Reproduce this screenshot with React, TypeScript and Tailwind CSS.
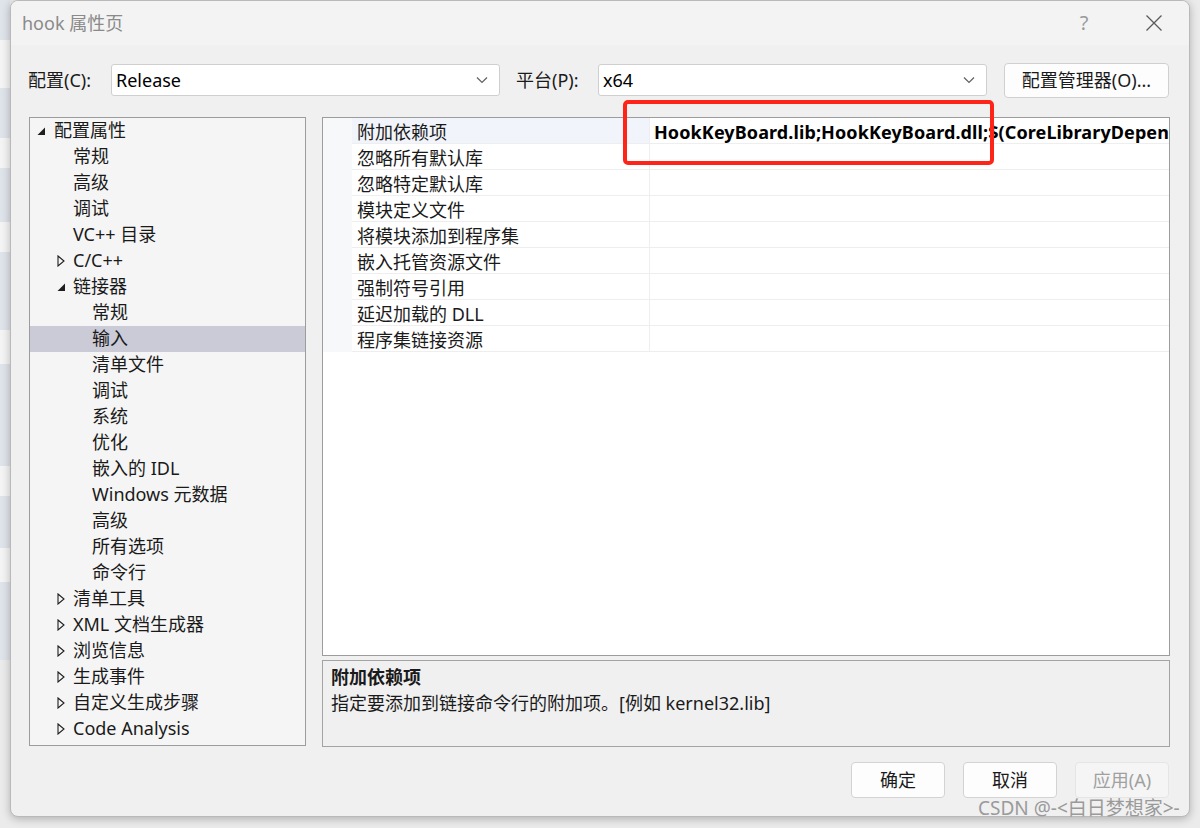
import React from 'react';

type TreeItem = {
  label: string;
  level: 0 | 1 | 2;
  expander?: 'open' | 'closed';
  selected?: boolean;
};

const tree: TreeItem[] = [
  { label: '配置属性', level: 0, expander: 'open' },
  { label: '常规', level: 1 },
  { label: '高级', level: 1 },
  { label: '调试', level: 1 },
  { label: 'VC++ 目录', level: 1 },
  { label: 'C/C++', level: 1, expander: 'closed' },
  { label: '链接器', level: 1, expander: 'open' },
  { label: '常规', level: 2 },
  { label: '输入', level: 2, selected: true },
  { label: '清单文件', level: 2 },
  { label: '调试', level: 2 },
  { label: '系统', level: 2 },
  { label: '优化', level: 2 },
  { label: '嵌入的 IDL', level: 2 },
  { label: 'Windows 元数据', level: 2 },
  { label: '高级', level: 2 },
  { label: '所有选项', level: 2 },
  { label: '命令行', level: 2 },
  { label: '清单工具', level: 1, expander: 'closed' },
  { label: 'XML 文档生成器', level: 1, expander: 'closed' },
  { label: '浏览信息', level: 1, expander: 'closed' },
  { label: '生成事件', level: 1, expander: 'closed' },
  { label: '自定义生成步骤', level: 1, expander: 'closed' },
  { label: 'Code Analysis', level: 1, expander: 'closed' },
];

const props = [
  '附加依赖项',
  '忽略所有默认库',
  '忽略特定默认库',
  '模块定义文件',
  '将模块添加到程序集',
  '嵌入托管资源文件',
  '强制符号引用',
  '延迟加载的 DLL',
  '程序集链接资源',
];

function Expander({ kind }: { kind: 'open' | 'closed' }) {
  if (kind === 'open') {
    return (
      <svg width="10" height="10" viewBox="0 0 10 10">
        <polygon points="9,1.5 9,9 1.5,9" fill="#1e1e1e" />
      </svg>
    );
  }
  return (
    <svg width="10" height="12" viewBox="0 0 10 12">
      <polygon points="2,1 8,6 2,11" fill="none" stroke="#1e1e1e" strokeWidth="1.1" />
    </svg>
  );
}

function Chevron() {
  return (
    <svg width="12" height="8" viewBox="0 0 12 8">
      <polyline points="1,1.5 6,6.5 11,1.5" fill="none" stroke="#606060" strokeWidth="1.2" />
    </svg>
  );
}

function Select({ value }: { value: string }) {
  return (
    <div className="w-[389px] h-[32px] shrink-0 bg-white border border-[#cfcfcf] rounded-[3px] flex items-center pl-[4px] pr-[11px]">
      <span className="flex-1 text-[18px] text-black leading-none">{value}</span>
      <Chevron />
    </div>
  );
}

// sliver of the code editor that peeks out behind the dialog
const bands = [
  { h: 40, bg: 'bg-[#dfe3ea]' },
  { h: 48, bg: 'bg-[#f4f4f4]' },
  { h: 50, bg: 'bg-[#dfe3ea]' },
  { h: 30, bg: 'bg-[#f4f4f4]' },
  { h: 54, bg: 'bg-[#dfe3ea]' },
  { h: 30, bg: 'bg-[#f4f4f4]' },
  { h: 78, bg: 'bg-[#dfe3ea]' },
  { h: 34, bg: 'bg-[#f4f4f4]' },
  { h: 102, bg: 'bg-[#dfe3ea]' },
  { h: 30, bg: 'bg-[#f4f4f4]' },
  { h: 52, bg: 'bg-[#dfe3ea]' },
  { h: 34, bg: 'bg-[#f4f4f4]' },
  { h: 78, bg: 'bg-[#dfe3ea]' },
  { h: 168, bg: 'bg-[#ebebeb]' },
];

function CodeSliver() {
  return (
    <div className="w-[10px] h-[828px] flex flex-col overflow-hidden shrink-0">
      {bands.map((b, i) => (
        <div key={i} className={`${b.bg} shrink-0`} style={{ height: b.h }} />
      ))}
    </div>
  );
}

export default function App() {
  return (
    <div className="relative w-[1200px] h-[828px] bg-[#ebebeb] flex overflow-hidden [font-family:'Noto_Sans','Noto_Sans_CJK_SC',sans-serif] text-[#1a1a1a]">
      <CodeSliver />
      <div className="relative w-[1180px] h-[817px] shrink-0 rounded-[8px] border border-[#b9b9b9] bg-[#f0f0f0] shadow-[0_2px_8px_rgba(0,0,0,0.25)] flex flex-col overflow-hidden">
        {/* title bar */}
        <div className="h-[44px] shrink-0 bg-[#f3f3f3] flex items-center pl-[11px]">
          <span className="flex-1 text-[18px] text-[#8a8a8a] leading-none">hook 属性页</span>
          <span className="w-[40px] text-center text-[20px] text-[#9a9a9a] leading-none mr-[41px]">?</span>
          <svg width="18" height="18" viewBox="0 0 18 18" className="mr-[26px]">
            <path d="M1.5 1.5 L16.5 16.5 M16.5 1.5 L1.5 16.5" stroke="#5a5a5a" strokeWidth="1.3" />
          </svg>
        </div>

        {/* config row */}
        <div className="flex items-center h-[36px] mt-[17px] pl-[17px] pr-[20px]">
          <span className="w-[83px] shrink-0 text-[18px] leading-none">配置(C):</span>
          <Select value="Release" />
          <span className="ml-[16px] w-[82px] shrink-0 text-[18px] leading-none">平台(P):</span>
          <Select value="x64" />
          <div className="ml-[17px] w-[165px] h-[35px] shrink-0 bg-[#fdfdfd] border border-[#d0d0d0] rounded-[4px] flex items-center justify-center text-[18px] leading-none">
            配置管理器(O)...
          </div>
        </div>

        {/* main area */}
        <div className="flex mt-[19px] pl-[18px] pr-[19px] gap-[16px] h-[630px]">
          {/* tree */}
          <div className="w-[277px] h-[629px] shrink-0 overflow-hidden border border-[#9c9c9c] bg-[#f5f5f5] flex flex-col">
            {tree.map((t, i) => (
              <div
                key={i}
                className={`h-[26px] shrink-0 flex items-center ${t.selected ? 'bg-[#cbcbd8]' : ''}`}
              >
                <div
                  className={`flex items-center justify-center w-[12px] shrink-0 ${
                    t.level === 0 ? 'ml-[5px]' : 'ml-[25px]'
                  }`}
                >
                  {t.expander ? <Expander kind={t.expander} /> : null}
                </div>
                <span
                  className={`text-[18px] leading-none whitespace-nowrap mb-[2px] ${
                    t.level === 2 ? 'ml-[25px]' : t.level === 1 ? 'ml-[6px]' : 'ml-[7px]'
                  }`}
                >
                  {t.label}
                </span>
              </div>
            ))}
          </div>

          {/* right column */}
          <div className="flex-1 min-w-0 flex flex-col gap-[4px]">
            <div className="h-[539px] border border-[#9c9c9c] bg-white flex flex-col overflow-hidden">
              {props.map((p, i) => (
                <div key={i} className="h-[26px] shrink-0 flex">
                  <div className="w-[29px] shrink-0 bg-[#f7f8fa]" />
                  <div
                    className={`w-[298px] shrink-0 flex items-center pl-[5px] border-b border-r border-[#eeeeee] ${
                      i === 0 ? 'bg-[#f1f4fa]' : ''
                    }`}
                  >
                    <span className="text-[18px] leading-none whitespace-nowrap mt-[2px]">{p}</span>
                  </div>
                  <div className="flex-1 min-w-0 flex items-center pl-[4px] overflow-hidden border-b border-[#eeeeee]">
                    {i === 0 && (
                      <span className="text-[18px] font-bold leading-none whitespace-nowrap text-black tracking-[0.1px] mt-[2px]">
                        HookKeyBoard.lib;HookKeyBoard.dll;$(CoreLibraryDepen
                      </span>
                    )}
                  </div>
                </div>
              ))}
            </div>
            <div className="h-[87px] border border-[#a3a3a3] bg-[#f0f0f0] pl-[8px] pt-[6px] flex flex-col gap-[6px]">
              <span className="text-[18px] font-bold leading-[20px]">附加依赖项</span>
              <span className="text-[18px] leading-[20px]">指定要添加到链接命令行的附加项。[例如 kernel32.lib]</span>
            </div>
          </div>
        </div>

        {/* footer buttons */}
        <div className="flex justify-end gap-[18px] pr-[20px] mt-[15px]">
          <div className="w-[94px] h-[36px] bg-[#fdfdfd] border border-[#d3d3d3] rounded-[4px] flex items-center justify-center text-[18px] leading-none">
            确定
          </div>
          <div className="w-[94px] h-[36px] bg-[#fdfdfd] border border-[#d3d3d3] rounded-[4px] flex items-center justify-center text-[18px] leading-none">
            取消
          </div>
          <div className="w-[94px] h-[36px] bg-[#f5f5f5] border border-[#e5e5e5] rounded-[4px] flex items-center justify-center text-[18px] leading-none text-[#a0a0a0]">
            应用(A)
          </div>
        </div>

        {/* red highlight annotation */}
        <div className="absolute left-[612px] top-[99px] w-[371px] h-[65px] border-[4px] border-[#ff2418] rounded-[5px]" />
      </div>

      {/* watermark */}
      <div className="absolute left-[978px] top-[797px] text-[19px] leading-[22px] text-[#9a9a9a] whitespace-nowrap">
        CSDN @-&lt;白日梦想家&gt;-
      </div>
    </div>
  );
}
